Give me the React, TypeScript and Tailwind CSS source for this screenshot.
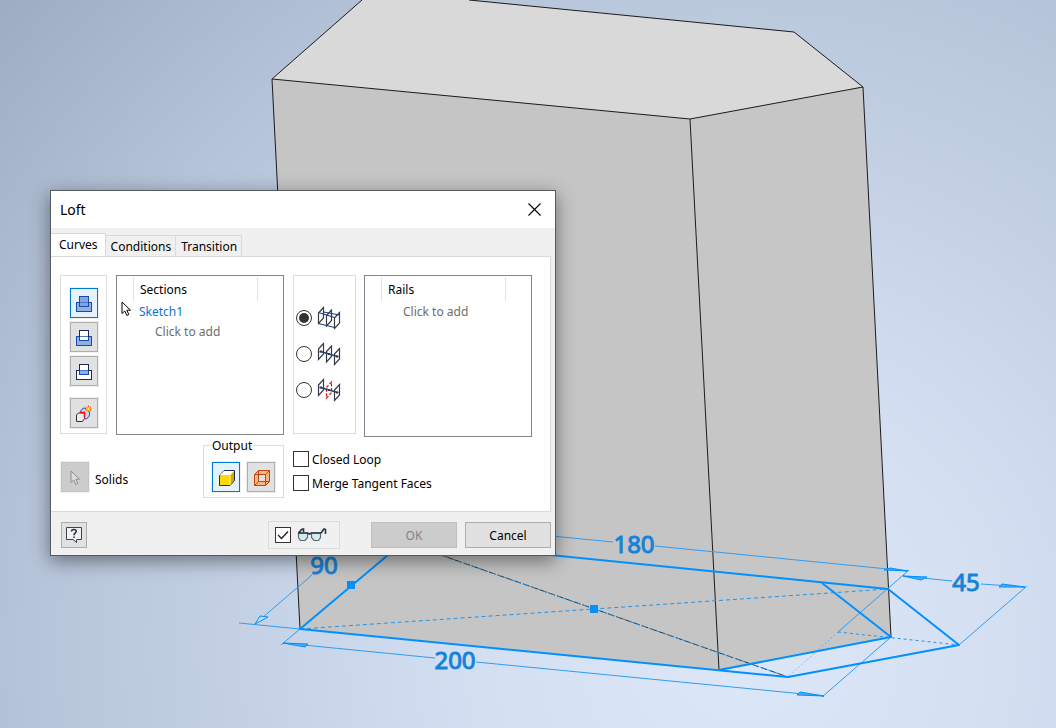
import { useState } from 'react';
import type { ReactNode } from 'react';

const Arrow = ({ points, fill = '#4fabf8' }: { points: string; fill?: string }) => (
  <polygon points={points} fill={fill} stroke="#0090ff" strokeWidth="1" />
);

const Scene = () => (
  <svg
    className="absolute inset-0 h-full w-full"
    viewBox="0 0 1056 728"
    preserveAspectRatio="xMidYMid slice"
    aria-hidden="true"
  >
    <defs>
      <radialGradient id="sky" gradientUnits="userSpaceOnUse" cx="740" cy="650" r="1020">
        <stop offset="0" stopColor="#dce7f8" />
        <stop offset="0.25" stopColor="#d4e0f2" />
        <stop offset="0.7" stopColor="#b6c4d9" />
        <stop offset="1" stopColor="#9ba9be" />
      </radialGradient>
    </defs>
    <rect width="1056" height="728" fill="url(#sky)" />

    {/* solid body */}
    <polygon points="272,79 362,0 469,0 794,32 863,87 690,119" fill="#d9d9d9" />
    <polygon points="272,79 690,119 719,670 300,629" fill="#c5c5c5" />
    <polygon points="690,119 863,87 891,637 719,670" fill="#c6c6c6" />
    <g fill="none" stroke="#1c1c1c" strokeWidth="1">
      <path d="M362 0L272 79L690 119L863 87L794 32L469 0" />
      <path d="M272 79L300 629M690 119L719 670M863 87L891 637" />
    </g>

    {/* construction lines */}
    <g fill="none" stroke="#2494e8" strokeWidth="1">
      <path d="M300 629L888 589" strokeDasharray="4 3" />
      <path d="M438 554L788 677" stroke="#333" strokeDasharray="7 2" />
      <path d="M438 554L788 677" strokeDasharray="4 3" />
      <path d="M838 632L959 645" strokeDasharray="3 3" />
      <path d="M838 632L788 677" strokeDasharray="1 3" />
    </g>

    {/* dimensions */}
    <g fill="none" stroke="#2e9df5" strokeWidth="1">
      <path d="M838 632L909 570M959 645L1027 586M891 637L822 697M300 629L281 645M239 623L300 629" />
      <path d="M500 531L613 542M655 546L908 571" />
      <path d="M903 576L952 581M981 584L1025 587" />
      <path d="M283 643L435 658M476 662L824 696" />
      <path d="M255 624L312 575" />
    </g>
    <Arrow points="255,624 260,616 268,617" fill="#c9dcf5" />
    <Arrow points="283,643 308,644 305,647" />
    <Arrow points="824,696 800,692 797,695" />
    <Arrow points="908,571 890,568 884,570" />
    <Arrow points="903,576 927,577 921,580" />
    <Arrow points="1025,587 1002,584 999,587" />

    {/* sketch profile */}
    <g fill="none" stroke="#0090ff" strokeWidth="2" strokeLinejoin="round">
      <path d="M388 555L300 629L788 677L959 645L888 589L500 550" />
      <path d="M822 583L891 637L719 670" />
    </g>
    <rect x="347" y="581" width="8" height="8" fill="#0090ff" />
    <rect x="590" y="605" width="8" height="8" fill="#0090ff" />

    <g
      className="font-['Noto_Sans',sans-serif] text-[24px]"
      fill="#1583d8"
      stroke="#1583d8"
      strokeWidth="1"
      textAnchor="middle"
    >
      <text x="634" y="553">180</text>
      <text x="966" y="591">45</text>
      <text x="455" y="669">200</text>
      <text x="324" y="574">90</text>
    </g>
  </svg>
);

interface BooleanIconProps {
  top: string;
  bottom: string;
  overlap: string;
  topStroke: string;
  bottomStroke: string;
}

const BooleanIcon = ({ top, bottom, overlap, topStroke, bottomStroke }: BooleanIconProps) => (
  <svg width="16" height="16" viewBox="0 0 16 16" shapeRendering="crispEdges">
    <rect x="0.5" y="6.5" width="15" height="9" fill={bottom} stroke={bottomStroke} />
    <rect x="3.5" y="0.5" width="9" height="10" fill={top} stroke={topStroke} />
    <rect x="4" y="7" width="8" height="3" fill={overlap} />
    <path d="M4 6.5H12" stroke="#4a76c6" />
    <path d="M3.5 7V10.5H12.5V7" fill="none" stroke="#1a49b0" />
  </svg>
);

const NewSolidIcon = () => (
  <svg width="18" height="18" viewBox="0 0 18 18">
    <path d="M5.5 8C5.5 4.5 8 3 10 3L14.5 7V9.5C14.5 12 12 14 10 14Z" fill="#c3d8f3" stroke="#1b49a5" />
    <path d="M1.5 10L3.5 8H9.5V13.5L7.5 16.5H1.5Z" fill="#ececec" stroke="#2f3338" />
    <path d="M4.5 7.5H9.5V12.5" fill="none" stroke="#ff1010" strokeWidth="1.6" />
    <circle cx="13.5" cy="4" r="2.6" fill="#ffc41f" />
    <path d="M13.5 0.5V7.5M10 4H17M11 1.5L16 6.5M16 1.5L11 6.5" stroke="#f0480f" strokeDasharray="1.5 1" />
    <circle cx="13.5" cy="4" r="1.2" fill="#ffe96b" />
  </svg>
);

const Frames = ({ kind }: { kind: 'rails' | 'center' | 'area' }) => (
  <svg width="24" height="24" viewBox="0 0 24 24" fill="none" stroke="#333c48" strokeWidth="1.2">
    <path d="M1.5 7L6.5 1.5V12L1.5 17.5Z" />
    <path d="M17.5 12L22.5 6.5V17L17.5 22.5Z" />
    {kind === 'area' ? (
      <path d="M9.5 9.5L14.5 4V14.5L9.5 20Z" stroke="#d8101c" strokeDasharray="3 1.5" />
    ) : (
      <path d="M9.5 9.5L14.5 4V14.5L9.5 20Z" />
    )}
    {kind === 'rails' ? (
      <path d="M1.5 6.5L17.5 11.5M6.5 6L22.5 9M1.5 17.5L17.5 21.5" stroke="#24406e" />
    ) : (
      <>
        <path d="M3.5 9.5L20.5 14.5" stroke="#24406e" strokeWidth="1.6" />
        <path d="M2.5 9.5H5M11 12H13M19 14.5H21.5" strokeWidth="2" />
      </>
    )}
  </svg>
);

const SolidIcon = () => (
  <svg width="18" height="18" viewBox="0 0 18 18">
    <path d="M1.5 6.5L6 1.5H16.5V11.5L12 16.5H1.5Z" fill="#ffd800" stroke="#1f2a55" />
    <path d="M2 6L6 2H16L12 6Z" fill="#fff" />
    <path d="M12.5 6.5L16 2.5V11.5L12.5 15.5Z" fill="#d9a300" />
    <path d="M12 6.5V16" stroke="#fff3a0" />
  </svg>
);

const SurfaceIcon = () => (
  <svg width="18" height="18" viewBox="0 0 18 18" stroke="#b54a12">
    <path
      d="M1.5 5.5L5.5 1.5H16.5V12.5L12.5 16.5H1.5ZM5.5 5.5V12.5H12.5V5.5Z"
      fill="#ffb27d"
      fillRule="evenodd"
    />
    <path d="M1.5 5.5H12.5V16.5M12.5 5.5L16.5 1.5M5.5 1.5V12.5L1.5 16.5M5.5 12.5H16.5" fill="none" />
  </svg>
);

const PointerIcon = ({ fill, stroke }: { fill: string; stroke: string }) => (
  <svg width="11" height="16" viewBox="0 0 11 16">
    <path d="M1 1V12.5L3.8 10L5.8 14.5L7.8 13.6L5.9 9.2H9.5Z" fill={fill} stroke={stroke} />
  </svg>
);

const HelpIcon = () => (
  <svg width="18" height="18" viewBox="0 0 18 18">
    <path d="M1.5 1.5H16.5V13.5H11.5V16.5L8 13.5H1.5Z" fill="#eef2f5" stroke="#3b444e" />
    <path
      d="M6.5 5.5C6.5 2.8 11.5 2.8 11.2 5.5C11 7.2 9 7.2 9 9.2M9 10.5V12"
      fill="none"
      stroke="#333"
      strokeWidth="1.6"
    />
  </svg>
);

const GlassesIcon = () => (
  <svg width="30" height="14" viewBox="0 0 30 14" fill="none" stroke="#5b6b76" strokeWidth="1.2">
    <path d="M1.5 5V9.5L3.5 12.5H8L10.5 9.5V5Z" fill="#d5ebef" />
    <path d="M14.5 5V9.5L17 12.5H21.5L23.5 9.5V5Z" fill="#d5ebef" />
    <path
      d="M1 5H10.5L12.5 6L14.5 5H24M1.5 5L4.5 1.5L6.5 1V4M24 5L27 1L28.5 1.5V6"
      stroke="#2b3540"
      strokeWidth="1.6"
    />
  </svg>
);

interface ToolButtonProps {
  label: string;
  active?: boolean;
  disabled?: boolean;
  onClick?: () => void;
  children: ReactNode;
}

const ToolButton = ({ label, active, disabled, onClick, children }: ToolButtonProps) => {
  const look = active
    ? 'border-[#0078d7] bg-[#e5f1fb]'
    : disabled
      ? 'border-[#c4c4c4] bg-[#cccccc]'
      : 'border-[#adadad] bg-[#e1e1e1]';
  return (
    <button
      type="button"
      aria-label={label}
      aria-pressed={active}
      disabled={disabled}
      onClick={onClick}
      className={`flex h-[30px] w-7 items-center justify-center border pt-0.5 pl-px outline-1 outline-[#f0f0f0] ${look}`}
    >
      {children}
    </button>
  );
};

const CheckBox = ({ id, defaultChecked }: { id: string; defaultChecked?: boolean }) => (
  <span className="grid">
    <input
      id={id}
      type="checkbox"
      defaultChecked={defaultChecked}
      className="peer col-start-1 row-start-1 h-4 w-4 appearance-none border border-[#333] bg-white"
    />
    <svg
      className="pointer-events-none invisible col-start-1 row-start-1 peer-checked:visible"
      width="16"
      height="16"
      viewBox="0 0 16 16"
      fill="none"
      stroke="#222"
      strokeWidth="1.4"
    >
      <path d="M3 8L6.5 11.5L13 4.5" />
    </svg>
  </span>
);

const ListHeader = ({ children }: { children: ReactNode }) => (
  <div className="mx-4 mt-px flex h-6 w-[125px] items-center border-x border-[#e2e2e2] pt-0.5 pl-1.5">
    {children}
  </div>
);

const tabs = ['Curves', 'Conditions', 'Transition'];

const operations = [
  {
    label: 'Join',
    icon: (
      <BooleanIcon top="#83a7da" bottom="#8fb2e3" overlap="#83a7da" topStroke="#1a49b0" bottomStroke="#1a49b0" />
    ),
  },
  {
    label: 'Cut',
    icon: <BooleanIcon top="#fff" bottom="#8fb2e3" overlap="#fff" topStroke="#1c2a55" bottomStroke="#1a49b0" />,
  },
  {
    label: 'Intersect',
    icon: <BooleanIcon top="#fff" bottom="#fff" overlap="#8fb2e3" topStroke="#1c2a55" bottomStroke="#1c2a55" />,
  },
];

const loftKinds = [
  { kind: 'rails', label: 'Rails' },
  { kind: 'center', label: 'Center line' },
  { kind: 'area', label: 'Area loft' },
] as const;

const LoftDialog = () => {
  const [tab, setTab] = useState('Curves');
  const [operation, setOperation] = useState('Join');
  const [output, setOutput] = useState('Solid');

  return (
    <div
      role="dialog"
      aria-labelledby="loft-title"
      className="absolute top-[190px] left-[50px] w-[506px] border border-[#555960] bg-[#f0f0f0] shadow-[0_5px_18px_rgba(0,0,0,0.45)]"
    >
      <header className="flex h-[37px] items-center justify-between bg-white pr-3.5 pl-[9px]">
        <h1 id="loft-title" className="text-[14px]">Loft</h1>
        <button type="button" aria-label="Close" className="flex h-6 w-3.5 items-center justify-center">
          <svg width="13" height="13" viewBox="0 0 13 13" stroke="#000" strokeWidth="1.1">
            <path d="M0.5 0.5L12.5 12.5M12.5 0.5L0.5 12.5" />
          </svg>
        </button>
      </header>

      <div role="tablist" className="flex h-7 items-end">
        {tabs.map((name) => (
          <button
            key={name}
            type="button"
            role="tab"
            aria-selected={tab === name}
            onClick={() => setTab(name)}
            className={
              tab === name
                ? 'h-[23px] border-t border-r border-[#d9d9d9] bg-white pr-[7px] pl-2'
                : 'h-[21px] border-t border-r border-[#d9d9d9] pt-0.5 pr-1 pl-[5px]'
            }
          >
            {name}
          </button>
        ))}
      </div>

      <div role="tabpanel" className="mr-1 flex h-64 flex-col border-t border-r border-b border-[#d9d9d9] bg-white pt-[18px] pl-[9px]">
        <div className="flex h-[162px] items-start gap-[9px]">
          <div className="flex h-[159px] w-[47px] flex-col items-center gap-1 border border-[#dcdcdc] pt-3">
            {operations.map(({ label, icon }) => (
              <ToolButton
                key={label}
                label={label}
                active={operation === label}
                onClick={() => setOperation(label)}
              >
                {icon}
              </ToolButton>
            ))}
            <div className="mt-2">
              <ToolButton label="New solid">
                <NewSolidIcon />
              </ToolButton>
            </div>
          </div>

          <div className="relative h-40 w-[168px] border border-[#828790]">
            <ListHeader>Sections</ListHeader>
            <div className="mt-px flex h-5 items-center pl-[22px] text-[#0f72d0]">Sketch1</div>
            <div className="flex h-5 items-center pl-[38px] text-[#6d6d6d]">Click to add</div>
            <div className="absolute top-[25px] left-1">
              <PointerIcon fill="#fff" stroke="#000" />
            </div>
          </div>

          <div className="flex items-start gap-2">
            <div className="flex h-[159px] w-[63px] flex-col gap-3 border border-[#dcdcdc] pt-[30px] pl-0.5">
              {loftKinds.map(({ kind, label }, i) => (
                <label key={kind} className="flex h-6 items-center gap-[5px]">
                  <input
                    type="radio"
                    name="loft-kind"
                    aria-label={label}
                    defaultChecked={i === 0}
                    className="h-4 w-4 appearance-none rounded-full border border-[#333] bg-clip-content p-[2px] checked:bg-[#333]"
                  />
                  <Frames kind={kind} />
                </label>
              ))}
            </div>

            <div className="h-[162px] w-[168px] border border-[#828790]">
              <ListHeader>Rails</ListHeader>
              <div className="mt-px flex h-5 items-center pl-[38px] text-[#6d6d6d]">Click to add</div>
            </div>
          </div>
        </div>

        <div className="flex items-start gap-[9px]">
          <div className="flex w-[224px] items-start justify-between">
            <div className="flex items-center gap-1.5 pt-[25px] pl-px">
              <ToolButton label="Select solids" disabled>
                <PointerIcon fill="#dcdcdc" stroke="#8f8f8f" />
              </ToolButton>
              <span className="pt-1.5">Solids</span>
            </div>
            <fieldset className="h-[61px] w-[81px] border border-[#dcdcdc] px-2">
              <legend className="h-4 leading-[18px]">Output</legend>
              <div className="mt-[9px] flex gap-[7px]">
                <ToolButton label="Solid" active={output === 'Solid'} onClick={() => setOutput('Solid')}>
                  <SolidIcon />
                </ToolButton>
                <ToolButton label="Surface" active={output === 'Surface'} onClick={() => setOutput('Surface')}>
                  <SurfaceIcon />
                </ToolButton>
              </div>
            </fieldset>
          </div>

          <div className="flex flex-col gap-2 pt-3.5">
            <div className="flex h-4 items-center gap-[3px]">
              <CheckBox id="closed-loop" />
              <label htmlFor="closed-loop" className="pt-0.5">Closed Loop</label>
            </div>
            <div className="flex h-4 items-center gap-[3px]">
              <CheckBox id="merge-faces" />
              <label htmlFor="merge-faces" className="pt-0.5">Merge Tangent Faces</label>
            </div>
          </div>
        </div>
      </div>

      <footer className="flex h-[43px] items-center pt-0.5 pr-1 pl-2.5">
        <button
          type="button"
          aria-label="Help"
          className="flex h-[26px] w-[26px] items-center justify-center border border-[#adadad] bg-[#e1e1e1]"
        >
          <HelpIcon />
        </button>
        <div className="ml-auto flex h-7 w-[72px] items-center gap-1.5 border border-[#dcdcdc] pl-1.5">
          <CheckBox id="preview" defaultChecked />
          <label htmlFor="preview" aria-label="Preview">
            <GlassesIcon />
          </label>
        </div>
        <button
          type="button"
          disabled
          className="ml-[31px] h-[26px] w-[86px] border border-[#bfbfbf] bg-[#cccccc] pt-0.5 text-[#838383]"
        >
          OK
        </button>
        <button type="button" className="ml-2 h-[26px] w-[86px] border border-[#adadad] bg-[#e1e1e1] pt-0.5">
          Cancel
        </button>
      </footer>
    </div>
  );
};

const App = () => (
  <main className="relative min-h-screen overflow-hidden bg-[#b6c4d9] font-['Noto_Sans',sans-serif] text-[12px] leading-4 text-black">
    <Scene />
    <LoftDialog />
  </main>
);

export default App;
